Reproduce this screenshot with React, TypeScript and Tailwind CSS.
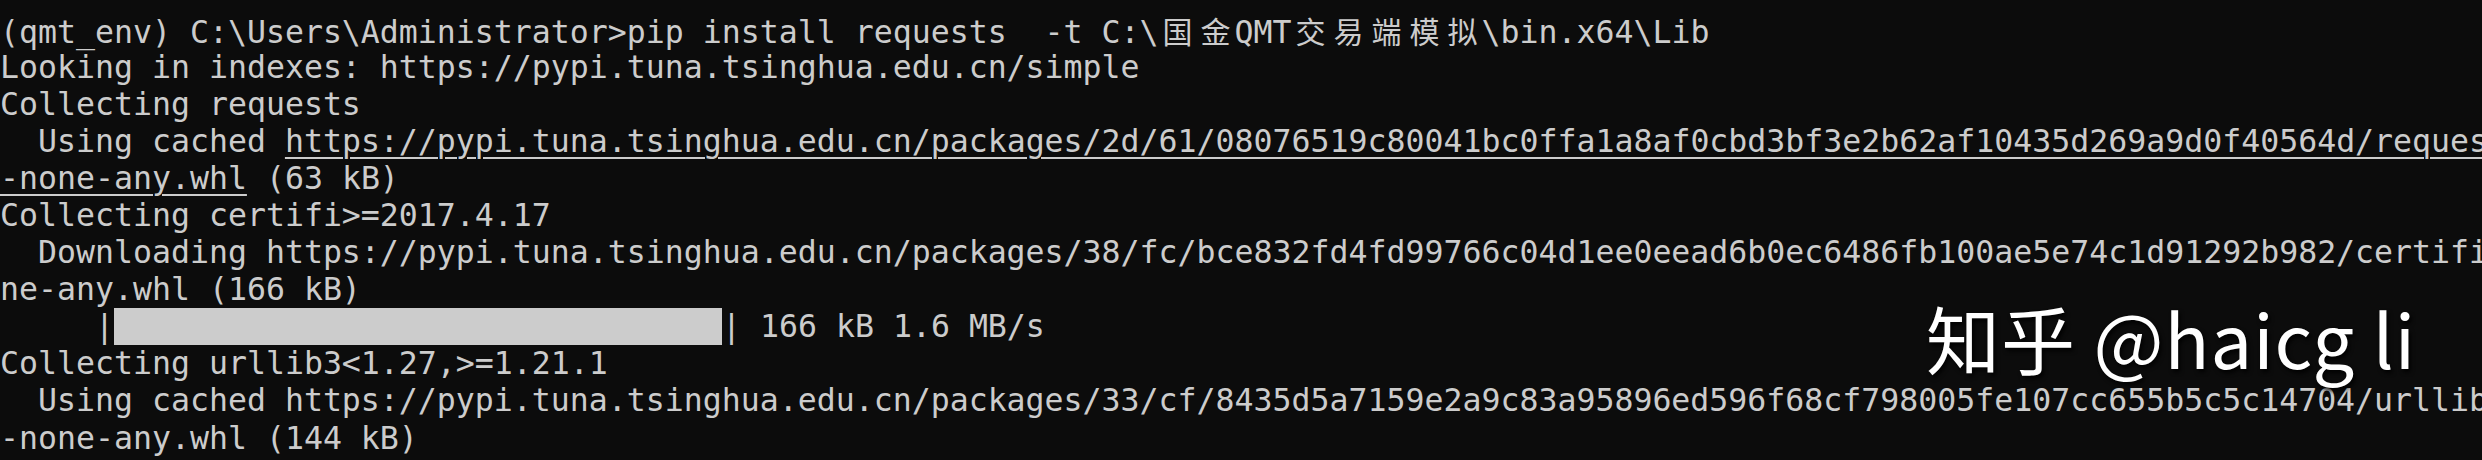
import React from 'react'

const Cjk = ({ text }: { text: string }) => (
  <>
    {Array.from(text).map((ch, i) => (
      <span
        key={i}
        className="inline-block w-[38px] text-center text-[30px] leading-[37.1px] font-['Noto_Sans_CJK_SC',sans-serif]"
      >
        {ch}
      </span>
    ))}
  </>
)

const Line = (props: { children?: React.ReactNode }) => (
  <div className="h-[37.1px] whitespace-pre">{props.children}</div>
)

const U = (props: { children?: React.ReactNode }) => (
  <span className="underline decoration-2 underline-offset-[5px]">{props.children}</span>
)

export default function App() {
  return (
    <div className="relative w-[2482px] h-[460px] overflow-hidden bg-[#0c0c0c] text-[#cccccc] font-['DejaVu_Sans_Mono',monospace] text-[31.56px] leading-[37.1px] pt-[11.5px]">
      <Line>
        {'(qmt_env) C:\\Users\\Administrator>pip install requests  -t C:\\'}
        <Cjk text="国金" />
        QMT
        <Cjk text="交易端模拟" />
        {'\\bin.x64\\Lib'}
      </Line>
      <Line>Looking in indexes: https://pypi.tuna.tsinghua.edu.cn/simple</Line>
      <Line>Collecting requests</Line>
      <Line>
        {'  Using cached '}
        <U>
          https://pypi.tuna.tsinghua.edu.cn/packages/2d/61/08076519c80041bc0ffa1a8af0cbd3bf3e2b62af10435d269a9d0f40564d/requests-2.27.1-py2.py3
        </U>
      </Line>
      <Line>
        <U>-none-any.whl</U> (63 kB)
      </Line>
      <Line>Collecting certifi&gt;=2017.4.17</Line>
      <Line>
        {'  Downloading https://pypi.tuna.tsinghua.edu.cn/packages/38/fc/bce832fd4fd99766c04d1ee0eead6b0ec6486fb100ae5e74c1d91292b982/certifi-2021.10.8-py2.py3-no'}
      </Line>
      <Line>ne-any.whl (166 kB)</Line>
      <div className="flex h-[37.1px] whitespace-pre">
        <span>{'     |'}</span>
        <span className="w-[608px] h-full bg-[#cccccc]" />
        <span>| 166 kB 1.6 MB/s</span>
      </div>
      <Line>Collecting urllib3&lt;1.27,&gt;=1.21.1</Line>
      <Line>
        {'  Using cached https://pypi.tuna.tsinghua.edu.cn/packages/33/cf/8435d5a7159e2a9c83a95896ed596f68cf798005fe107cc655b5c5c14704/urllib3-1.26.9-py2.py3'}
      </Line>
      <Line>-none-any.whl (144 kB)</Line>

      {/* watermark */}
      <div className="absolute left-[1926px] top-[300px] whitespace-pre text-white text-[74px] leading-none tracking-[1px] font-['Noto_Sans_CJK_SC',sans-serif] font-normal [text-shadow:2px_3px_4px_rgba(0,0,0,0.9)]">
        知乎 @haicg li
      </div>
    </div>
  )
}
